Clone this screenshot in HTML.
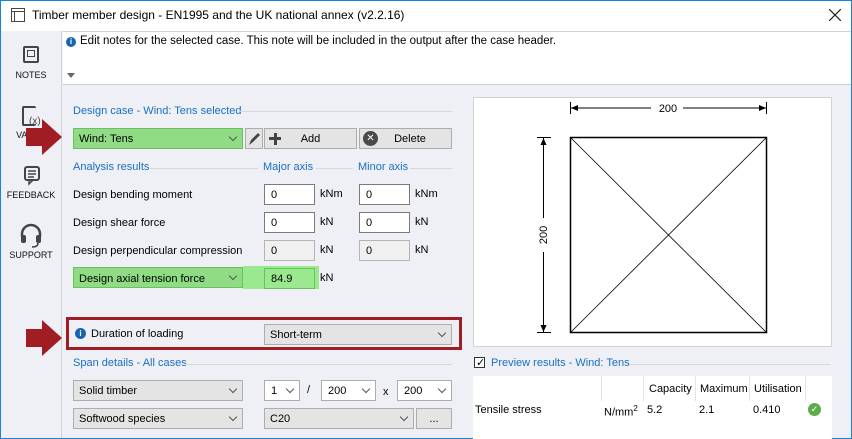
<!DOCTYPE html>
<html><head><style>
*{margin:0;padding:0;box-sizing:border-box}
body{width:852px;height:439px;overflow:hidden;background:#eef0f5;font-family:"Liberation Sans",sans-serif;font-size:11px;color:#000;position:relative}
.a{position:absolute}
.blue{color:#1a6fc0;font-size:11px}
.inp{position:absolute;background:#fff;border:1px solid #7a7a7a;height:21px;padding:4px 6px;font-size:11px}
.dis{background:#f0f0f0;border-color:#b4b4b4}
.sel{position:absolute;background:#e4e4e4;border:1px solid #adadad;height:21px;padding:4px 5px;font-size:11px}
.chev{position:absolute;right:6px;top:5px;width:6px;height:6px;border-right:1px solid #555;border-bottom:1px solid #555;transform:rotate(45deg)}
.line{position:absolute;height:1px;background:#d6d8dc}
.lbl{position:absolute;font-size:11px}
.side{position:absolute;width:62px;text-align:center;font-size:9px;color:#111}
</style></head><body>
<div class="a" style="left:0;top:0;width:852px;height:439px;border:1px solid #1883d7;border-top:none"></div>
<div class="a" style="left:1px;top:0;width:850px;height:31px;background:#fff;border-top:1px solid #1883d7"></div>
<div class="a" style="left:11px;top:8px;width:14px;height:14px;border:1px solid #444"></div>
<div class="a" style="left:11px;top:11px;width:14px;height:1px;background:#444"></div>
<div class="a" style="left:14px;top:11px;width:1px;height:11px;background:#444"></div>
<div class="a" style="left:32px;top:8px;font-size:12px">Timber member design - EN1995 and the UK national annex (v2.2.16)</div>
<svg class="a" style="left:829px;top:9px" width="12" height="12"><path d="M0 0L12 12M12 0L0 12" stroke="#222" stroke-width="1.2"/></svg>
<div class="a" style="left:1px;top:31px;width:61px;height:407px;background:#eef0f5;border-right:1px solid #d0d2d6"></div>
<div class="a" style="left:63px;top:31px;width:788px;height:54px;background:#fff;border-top:1px solid #d0d2d6;border-bottom:1px solid #c8cacd"></div>
<div class="a" style="left:66px;top:37px;width:10px;height:10px;border-radius:50%;background:#1565b0;color:#fff;font-size:8px;font-weight:bold;text-align:center;line-height:10px">i</div>
<div class="a" style="left:80px;top:35px;font-size:11.5px">Edit notes for the selected case. This note will be included in the output after the case header.</div>
<div class="a" style="left:67px;top:73px;width:0;height:0;border-left:4px solid transparent;border-right:4px solid transparent;border-top:5px solid #666"></div>
<!-- sidebar -->
<div class="a" style="left:23px;top:46px;width:16px;height:17px;border:2px solid #444;border-radius:2px"></div>
<div class="a" style="left:27px;top:50px;width:8px;height:7px;border:1.5px solid #444"></div>
<div class="side" style="left:0;top:70px">NOTES</div>
<div class="a" style="left:22px;top:106px;width:14px;height:20px;border:2px solid #444;border-right:none;border-radius:2px"></div>
<div class="a" style="left:29px;top:116px;font-size:10px;color:#444">(x)</div>
<div class="side" style="left:-6px;top:130px">VAR</div>
<svg class="a" style="left:24px;top:166px" width="16" height="20"><rect x="1" y="1" width="14" height="13" rx="2" fill="none" stroke="#444" stroke-width="2"/><path d="M4 5h8M4 8h8M4 11h6M5 14l0 4 4-4" stroke="#444" stroke-width="1.5" fill="none"/></svg>
<div class="side" style="left:0;top:190px">FEEDBACK</div>
<svg class="a" style="left:19px;top:223px" width="24" height="26"><path d="M3 14v-3a9 9 0 0 1 18 0v3" stroke="#444" stroke-width="2.5" fill="none"/><rect x="2" y="12" width="5" height="8" rx="2" fill="#444"/><rect x="17" y="12" width="5" height="8" rx="2" fill="#444"/><path d="M19 20q0 4-6 4" stroke="#444" stroke-width="1.5" fill="none"/></svg>
<div class="side" style="left:0;top:250px">SUPPORT</div>
<!-- arrows -->
<svg class="a" style="left:24px;top:118px" width="40" height="38"><polygon points="2,10 18,10 18,1 38,19 18,37 18,28 2,28" fill="#a01d24"/></svg>
<svg class="a" style="left:24px;top:319px" width="40" height="38"><polygon points="2,10 18,10 18,1 38,19 18,37 18,28 2,28" fill="#a01d24"/></svg>
<!-- design case -->
<div class="a blue" style="left:73px;top:105px">Design case - Wind: Tens selected</div>
<div class="line" style="left:240px;top:111px;width:212px"></div>
<div class="sel" style="left:73px;top:128px;width:170px;background:#8fdc84;border-color:#6cbf63">Wind: Tens<span class="chev"></span></div>
<svg class="a" style="left:245px;top:128px" width="18" height="21"><rect x="0.5" y="0.5" width="17" height="20" fill="#e4e4e4" stroke="#adadad"/><path d="M4 17l2-5 7-7 2 2-7 7z" fill="#444"/></svg>
<div class="sel" style="left:264px;top:128px;width:93px;text-align:center">Add</div>
<div class="a" style="left:269px;top:137px;width:12px;height:3px;background:#444"></div>
<div class="a" style="left:273.5px;top:132.5px;width:3px;height:12px;background:#444"></div>
<div class="sel" style="left:359px;top:128px;width:93px;text-align:center;padding-left:14px">Delete</div>
<div class="a" style="left:363px;top:131px;width:15px;height:15px;border-radius:50%;background:#4a4a4a;color:#fff;font-size:10px;text-align:center;line-height:15px">✕</div>
<!-- analysis -->
<div class="a blue" style="left:73px;top:161px">Analysis results</div>
<div class="line" style="left:150px;top:168px;width:108px"></div>
<div class="a blue" style="left:263px;top:161px">Major axis</div>
<div class="line" style="left:316px;top:168px;width:37px"></div>
<div class="a blue" style="left:358px;top:161px">Minor axis</div>
<div class="line" style="left:410px;top:168px;width:42px"></div>
<div class="lbl" style="left:73px;top:189px">Design bending moment</div>
<div class="inp" style="left:264px;top:184px;width:51px">0</div><div class="lbl" style="left:320px;top:188px">kNm</div>
<div class="inp" style="left:359px;top:184px;width:51px">0</div><div class="lbl" style="left:415px;top:188px">kNm</div>
<div class="lbl" style="left:73px;top:217px">Design shear force</div>
<div class="inp" style="left:264px;top:212px;width:51px">0</div><div class="lbl" style="left:320px;top:216px">kN</div>
<div class="inp" style="left:359px;top:212px;width:51px">0</div><div class="lbl" style="left:415px;top:216px">kN</div>
<div class="lbl" style="left:73px;top:245px">Design perpendicular compression</div>
<div class="inp dis" style="left:264px;top:240px;width:51px">0</div><div class="lbl" style="left:320px;top:244px">kN</div>
<div class="inp dis" style="left:359px;top:240px;width:51px">0</div><div class="lbl" style="left:415px;top:244px">kN</div>
<div class="sel" style="left:73px;top:267px;width:170px;background:#8fdc84;border-color:#6cbf63;padding-top:5px">Design axial tension force<span class="chev"></span></div>
<div class="a" style="left:243px;top:266px;width:76px;height:23px;background:#9be98f"></div>
<div class="inp" style="left:264px;top:268px;width:51px;background:#9be98f;border-color:#6cbf63">84.9</div>
<div class="lbl" style="left:320px;top:272px">kN</div>
<!-- duration -->
<div class="a" style="left:66px;top:317px;width:396px;height:33px;border:3px solid #a01d24"></div>
<div class="a" style="left:75px;top:328px;width:11px;height:11px;border-radius:50%;background:#1565b0;color:#fff;font-size:8px;font-weight:bold;text-align:center;line-height:11px">i</div>
<div class="lbl" style="left:91px;top:328px">Duration of loading</div>
<div class="sel" style="left:264px;top:324px;width:188px">Short-term<span class="chev"></span></div>
<!-- span -->
<div class="a blue" style="left:73px;top:357px">Span details - All cases</div>
<div class="line" style="left:185px;top:364px;width:267px"></div>
<div class="sel" style="left:73px;top:380px;width:170px">Solid timber<span class="chev"></span></div>
<div class="inp" style="left:264px;top:380px;width:36px;border-color:#adadad">1<span class="chev"></span></div>
<div class="lbl" style="left:307px;top:384px">/</div>
<div class="inp" style="left:321px;top:380px;width:55px;border-color:#adadad">200<span class="chev"></span></div>
<div class="lbl" style="left:383px;top:386px">x</div>
<div class="inp" style="left:397px;top:380px;width:55px;border-color:#adadad">200<span class="chev"></span></div>
<div class="sel" style="left:73px;top:408px;width:170px">Softwood species<span class="chev"></span></div>
<div class="sel" style="left:264px;top:408px;width:150px">C20<span class="chev"></span></div>
<div class="sel" style="left:416px;top:408px;width:36px;text-align:center">...</div>
<!-- drawing -->
<div class="a" style="left:473px;top:97px;width:359px;height:250px;background:#fff;border:1px solid #d0d2d6"></div>
<svg class="a" style="left:473px;top:97px" width="359" height="250">
<g stroke="#000" fill="none">
<rect x="97.5" y="40.5" width="196" height="195" stroke-width="1.5"/>
<path d="M98 41L293 235M293 41L98 235" stroke-width="0.8"/>
<path d="M97.5 5v12M293.5 5v12M98 11h80M210 11h83"/>
<path d="M64 40.5h14M64 235.5h14M70.5 41v80M70.5 155v80"/>
</g>
<g fill="#000"><polygon points="98,11 105,8 105,14"/><polygon points="293,11 286,8 286,14"/><polygon points="70.5,41 67.5,48 73.5,48"/><polygon points="70.5,235 67.5,228 73.5,228"/></g>
<text x="195" y="15" font-size="11" text-anchor="middle" font-family="Liberation Sans">200</text>
<text x="0" y="0" font-size="11" text-anchor="middle" font-family="Liberation Sans" transform="translate(74,138) rotate(-90)">200</text>
</svg>
<!-- preview -->
<div class="a" style="left:474px;top:357px;width:11px;height:11px;border:1px solid #333;background:#fff"></div>
<div class="a" style="left:476px;top:356px;font-size:11px">✓</div>
<div class="a blue" style="left:491px;top:357px">Preview results - Wind: Tens</div>
<div class="line" style="left:630px;top:364px;width:201px"></div>
<div class="a" style="left:473px;top:376px;width:359px;height:63px;background:#fff"></div>
<div class="a" style="left:601px;top:376px;width:1px;height:25px;background:#e4e4e4"></div>
<div class="a" style="left:643px;top:376px;width:1px;height:25px;background:#e4e4e4"></div>
<div class="a" style="left:695px;top:376px;width:1px;height:25px;background:#e4e4e4"></div>
<div class="a" style="left:749px;top:376px;width:1px;height:25px;background:#e4e4e4"></div>
<div class="a" style="left:805px;top:376px;width:1px;height:25px;background:#e4e4e4"></div>
<div class="lbl" style="left:649px;top:383px">Capacity</div>
<div class="lbl" style="left:700px;top:383px">Maximum</div>
<div class="lbl" style="left:754px;top:383px">Utilisation</div>
<div class="lbl" style="left:475px;top:404px">Tensile stress</div>
<div class="lbl" style="left:604px;top:404px">N/mm<sup style="font-size:8px">2</sup></div>
<div class="lbl" style="left:647px;top:404px">5.2</div>
<div class="lbl" style="left:699px;top:404px">2.1</div>
<div class="lbl" style="left:753px;top:404px">0.410</div>
<div class="a" style="left:808px;top:403px;width:13px;height:13px;border-radius:50%;background:#5cae4a;color:#fff;font-size:9px;text-align:center;line-height:13px">✓</div>
</body></html>
